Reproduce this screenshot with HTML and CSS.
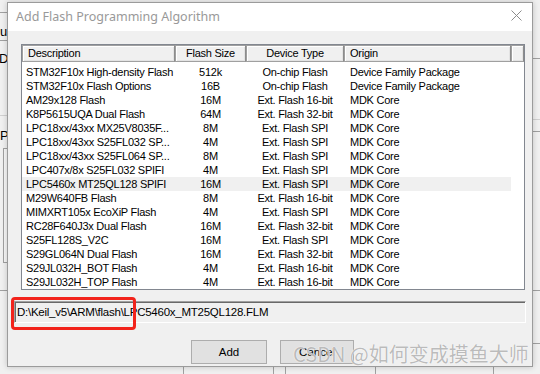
FILE: index.html
```html
<!DOCTYPE html>
<html lang="en">
<head>
    <meta charset="UTF-8">
    <title>Add Flash Programming Algorithm</title>
    <link rel="stylesheet" href="styles.css">
</head>
<body>
    <div class="desktop">
        <!-- Fenster im Hintergrund, nur Reste sichtbar -->
        <div class="backwin">
            <div class="bg-line" style="top: 12px; left: 0; width: 8px;"></div>
            <div class="bg-text" style="top: 24px; left: 0;">u</div>
            <div class="bg-line" style="top: 40px; left: 0; width: 8px;"></div>
            <div class="bg-text" style="top: 51px; left: -1px;">De</div>
            <div class="bg-line light" style="top: 115px; left: 0; width: 8px;"></div>
            <div class="bg-text" style="top: 128px; left: 0;">Pr</div>
            <div class="bg-box"></div>
            <div class="bg-line" style="top: 290px; left: 0; width: 8px;"></div>
            <div class="bg-line" style="top: 58px; left: 532px; width: 8px;"></div>
            <div class="bg-line light" style="top: 119px; left: 532px; width: 8px;"></div>
            <div class="bg-line" style="top: 131px; left: 532px; width: 8px;"></div>
            <div class="bg-line" style="top: 290px; left: 532px; width: 8px;"></div>
            <div class="bg-line" style="top: 343px; left: 532px; width: 8px;"></div>
            <div class="bg-vline" style="left: 183px;"></div>
            <div class="bg-vline" style="left: 273px;"></div>
            <div class="bg-vline" style="left: 285px;"></div>
            <div class="bg-vline" style="left: 375px;"></div>
            <div class="bg-vline" style="left: 493px;"></div>
        </div>

        <!-- Dialog -->
        <div class="dialog">
            <div class="titlebar">
                <span class="title">Add Flash Programming Algorithm</span>
                <svg class="close" width="11" height="11" viewBox="0 0 11 11">
                    <path d="M0.5 0.5 L10.5 10.5 M10.5 0.5 L0.5 10.5" stroke="#8c8c8c" stroke-width="1" fill="none"/>
                </svg>
            </div>
            <div class="dlg-body">
                <div class="listbox">
                    <div class="lv-head">
                        <div class="hd">Description</div>
                        <div class="hd center">Flash Size</div>
                        <div class="hd center">Device Type</div>
                        <div class="hd">Origin</div>
                        <div class="hd"></div>
                    </div>
                    <div class="lv-rows">
                        <div class="row"><span>STM32F10x High-density Flash</span><span class="center">512k</span><span class="center">On-chip Flash</span><span class="origin">Device Family Package</span></div>
                        <div class="row"><span>STM32F10x Flash Options</span><span class="center">16B</span><span class="center">On-chip Flash</span><span class="origin">Device Family Package</span></div>
                        <div class="row"><span>AM29x128 Flash</span><span class="center">16M</span><span class="center">Ext. Flash 16-bit</span><span class="origin">MDK Core</span></div>
                        <div class="row"><span>K8P5615UQA Dual Flash</span><span class="center">64M</span><span class="center">Ext. Flash 32-bit</span><span class="origin">MDK Core</span></div>
                        <div class="row"><span>LPC18xx/43xx MX25V8035F...</span><span class="center">8M</span><span class="center">Ext. Flash SPI</span><span class="origin">MDK Core</span></div>
                        <div class="row"><span>LPC18xx/43xx S25FL032 SP...</span><span class="center">4M</span><span class="center">Ext. Flash SPI</span><span class="origin">MDK Core</span></div>
                        <div class="row"><span>LPC18xx/43xx S25FL064 SP...</span><span class="center">8M</span><span class="center">Ext. Flash SPI</span><span class="origin">MDK Core</span></div>
                        <div class="row"><span>LPC407x/8x S25FL032 SPIFI</span><span class="center">4M</span><span class="center">Ext. Flash SPI</span><span class="origin">MDK Core</span></div>
                        <div class="row selected"><span>LPC5460x MT25QL128 SPIFI</span><span class="center">16M</span><span class="center">Ext. Flash SPI</span><span class="origin">MDK Core</span></div>
                        <div class="row"><span>M29W640FB Flash</span><span class="center">8M</span><span class="center">Ext. Flash 16-bit</span><span class="origin">MDK Core</span></div>
                        <div class="row"><span>MIMXRT105x EcoXiP Flash</span><span class="center">4M</span><span class="center">Ext. Flash SPI</span><span class="origin">MDK Core</span></div>
                        <div class="row"><span>RC28F640J3x Dual Flash</span><span class="center">16M</span><span class="center">Ext. Flash 32-bit</span><span class="origin">MDK Core</span></div>
                        <div class="row"><span>S25FL128S_V2C</span><span class="center">16M</span><span class="center">Ext. Flash SPI</span><span class="origin">MDK Core</span></div>
                        <div class="row"><span>S29GL064N Dual Flash</span><span class="center">16M</span><span class="center">Ext. Flash 32-bit</span><span class="origin">MDK Core</span></div>
                        <div class="row"><span>S29JL032H_BOT Flash</span><span class="center">4M</span><span class="center">Ext. Flash 16-bit</span><span class="origin">MDK Core</span></div>
                        <div class="row"><span>S29JL032H_TOP Flash</span><span class="center">4M</span><span class="center">Ext. Flash 16-bit</span><span class="origin">MDK Core</span></div>
                    </div>
                </div>
                <div class="pathbox">D:\Keil_v5\ARM\flash\LPC5460x_MT25QL128.FLM</div>
                <div class="buttons">
                    <button class="btn btn-add">Add</button>
                    <button class="btn btn-cancel">Cancel</button>
                </div>
            </div>
        </div>

        <!-- Markierung und Wasserzeichen -->
        <div class="redmark"></div>
        <div class="watermark">CSDN @如何变成摸鱼大师</div>
    </div>
</body>
</html>
```

FILE: styles.css
```css
body {
    margin: 0;
    overflow: hidden;
    font-family: "Liberation Sans", Arial, sans-serif;
}
.desktop {
    position: relative;
    width: 540px;
    height: 374px;
    background: #f0f0f0;
    overflow: hidden;
}
.backwin {
    position: absolute;
    top: 0;
    left: 0;
    width: 540px;
    height: 374px;
}
.bg-line {
    position: absolute;
    height: 1px;
    background: #a0a0a0;
}
.bg-line.light {
    background: #d0d0d0;
}
.bg-vline {
    position: absolute;
    top: 367px;
    width: 1px;
    height: 7px;
    background: #a0a0a0;
}
.bg-text {
    position: absolute;
    font-size: 13px;
    color: #000;
}
.bg-box {
    position: absolute;
    top: 148px;
    left: 3px;
    width: 20px;
    height: 113px;
    border: 1px solid #a0a0a0;
    background: #f7f7f7;
}
.dialog {
    position: absolute;
    top: 2px;
    left: 7px;
    width: 526px;
    height: 365px;
    box-sizing: border-box;
    border: 1px solid #9b9b9b;
    background: #f0f0f0;
    box-shadow: 0 0 6px rgba(0, 0, 0, 0.2);
    display: flex;
    flex-direction: column;
}
.titlebar {
    height: 28px;
    background: #fff;
    display: flex;
    align-items: center;
    padding: 0 10px 0 8px;
}
.title {
    font-family: "Noto Sans", "Open Sans", sans-serif;
    font-size: 12.5px;
    color: #999;
    margin-top: -1px;
}
.close {
    margin-left: auto;
    margin-top: -3px;
}
.dlg-body {
    padding: 13px 0 0 6px;
    font-size: 11px;
    letter-spacing: -0.25px;
    color: #000;
}
.listbox {
    margin-left: 7px;
    width: 504px;
    height: 246px;
    box-sizing: border-box;
    border: 1px solid #828790;
    background: #fff;
    overflow: hidden;
}
.lv-head {
    display: grid;
    grid-template-columns: 153px 71px 98px 167px 13px;
    height: 17px;
    margin-bottom: 3px;
}
.hd {
    box-sizing: border-box;
    border: 1px solid #a0a0a0;
    border-right-color: #8c8c8c;
    background: #f0f0f0;
    box-shadow: inset 1px 1px 0 #fff, inset -1px -1px 0 #e3e3e3;
    padding-left: 5px;
    line-height: 15px;
    white-space: nowrap;
}
.hd.center {
    padding-left: 0;
    text-align: center;
}
.row {
    display: grid;
    grid-template-columns: 153px 71px 98px 167px;
    height: 14px;
    line-height: 14px;
    white-space: nowrap;
}
.row span {
    overflow: hidden;
    padding-left: 4px;
}
.row .center {
    padding-left: 0;
    text-align: center;
}
.row .origin {
    padding-left: 6px;
}
.row.selected {
    width: 489px;
    background: #f0f0f0;
}
.pathbox {
    margin-top: 11px;
    width: 512px;
    height: 22px;
    box-sizing: border-box;
    border: 1px solid;
    border-color: #a0a0a0 #fff #fff #a0a0a0;
    box-shadow: inset 1px 1px 0 #696969;
    padding-left: 2px;
    line-height: 21px;
    font-size: 11.5px;
}
.buttons {
    margin-top: 17px;
    display: flex;
    gap: 13px;
    padding-left: 177px;
}
.btn {
    height: 24px;
    box-sizing: border-box;
    background: #e1e1e1;
    border: 1px solid #adadad;
    font-family: "Liberation Sans", Arial, sans-serif;
    font-size: 11.5px;
    color: #000;
    padding: 0;
}
.btn-add {
    width: 76px;
}
.btn-cancel {
    width: 74px;
}
.redmark {
    position: absolute;
    top: 297px;
    left: 11px;
    width: 125px;
    height: 33px;
    box-sizing: border-box;
    border: 3px solid #f2231b;
    border-radius: 4px;
}
.watermark {
    position: absolute;
    top: 340px;
    left: 293px;
    font-family: "Noto Sans CJK SC", "Noto Sans", sans-serif;
    font-size: 20px;
    line-height: 28px;
    color: rgba(120, 120, 120, 0.5);
    text-shadow: 0 0 1px #fff, 0 0 1px #fff;
    white-space: nowrap;
}
```
